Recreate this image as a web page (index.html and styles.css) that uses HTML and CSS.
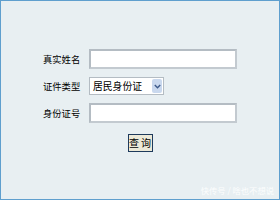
FILE: index.html
```html
<!DOCTYPE html>
<html lang="zh">
<head>
<meta charset="utf-8">
<link rel="stylesheet" href="styles.css">
</head>
<body>
<div class="frame">
  <div class="form">
    <span class="label">真实姓名</span>
    <div class="input"></div>
    <span class="label">证件类型</span>
    <div class="select"><span class="sel-text">居民身份证</span><span class="arrow"><svg width="7" height="5" viewBox="0 0 7 5"><path d="M0.8 1 L3.5 3.8 L6.2 1" fill="none" stroke="#3e5a8a" stroke-width="1.4"/></svg></span></div>
    <span class="label">身份证号</span>
    <div class="input"></div>
    <button class="btn">查 询</button>
  </div>
  <div class="watermark">快传号 / 啥也不想说</div>
</div>
</body>
</html>
```
FILE: styles.css
```css
html, body {
  margin: 0;
  padding: 0;
}
body {
  font-family: "Noto Sans CJK SC", "Noto Sans", sans-serif;
}
.frame {
  position: relative;
  width: 280px;
  height: 200px;
  box-sizing: border-box;
  border: 1px solid #5f9fce;
  background: #e8eff2;
  padding: 48px 0 0 42px;
}
.form {
  display: grid;
  grid-template-columns: 37px 148px;
  column-gap: 9px;
  row-gap: 8px;
  align-items: center;
  width: 194px;
}
.label {
  font-size: 9.3px;
  line-height: 12px;
  color: #000;
  text-align: right;
  white-space: nowrap;
}
.input {
  height: 20px;
  box-sizing: border-box;
  border: 2px solid #b4bcc3;
  border-right-color: #c3cad0;
  border-bottom-color: #c3cad0;
  background: #fff;
}
.select {
  width: 75px;
  height: 18px;
  box-sizing: border-box;
  border: 1px solid #b4bcc3;
  background: #fff;
  display: flex;
  align-items: center;
  justify-content: space-between;
  padding: 0 1px 0 3px;
}
.sel-text {
  font-size: 9.8px;
  line-height: 12px;
  color: #000;
  white-space: nowrap;
}
.arrow {
  width: 10px;
  height: 14px;
  background: #c9d8ee;
  border-radius: 2px;
  display: flex;
  align-items: center;
  justify-content: center;
}
.btn {
  grid-column: 1 / -1;
  justify-self: center;
  margin-top: 3px;
  width: 25px;
  height: 18px;
  padding: 0;
  box-sizing: border-box;
  border: 1px solid #1e3a5c;
  background: #ece9d8;
  font-family: "Noto Sans CJK SC", sans-serif;
  font-size: 10px;
  line-height: 12px;
  color: #000;
  white-space: nowrap;
}
.watermark {
  position: absolute;
  right: 5px;
  bottom: 3px;
  font-size: 8.3px;
  line-height: 11px;
  color: rgba(255, 255, 255, 0.9);
  white-space: nowrap;
}
```
